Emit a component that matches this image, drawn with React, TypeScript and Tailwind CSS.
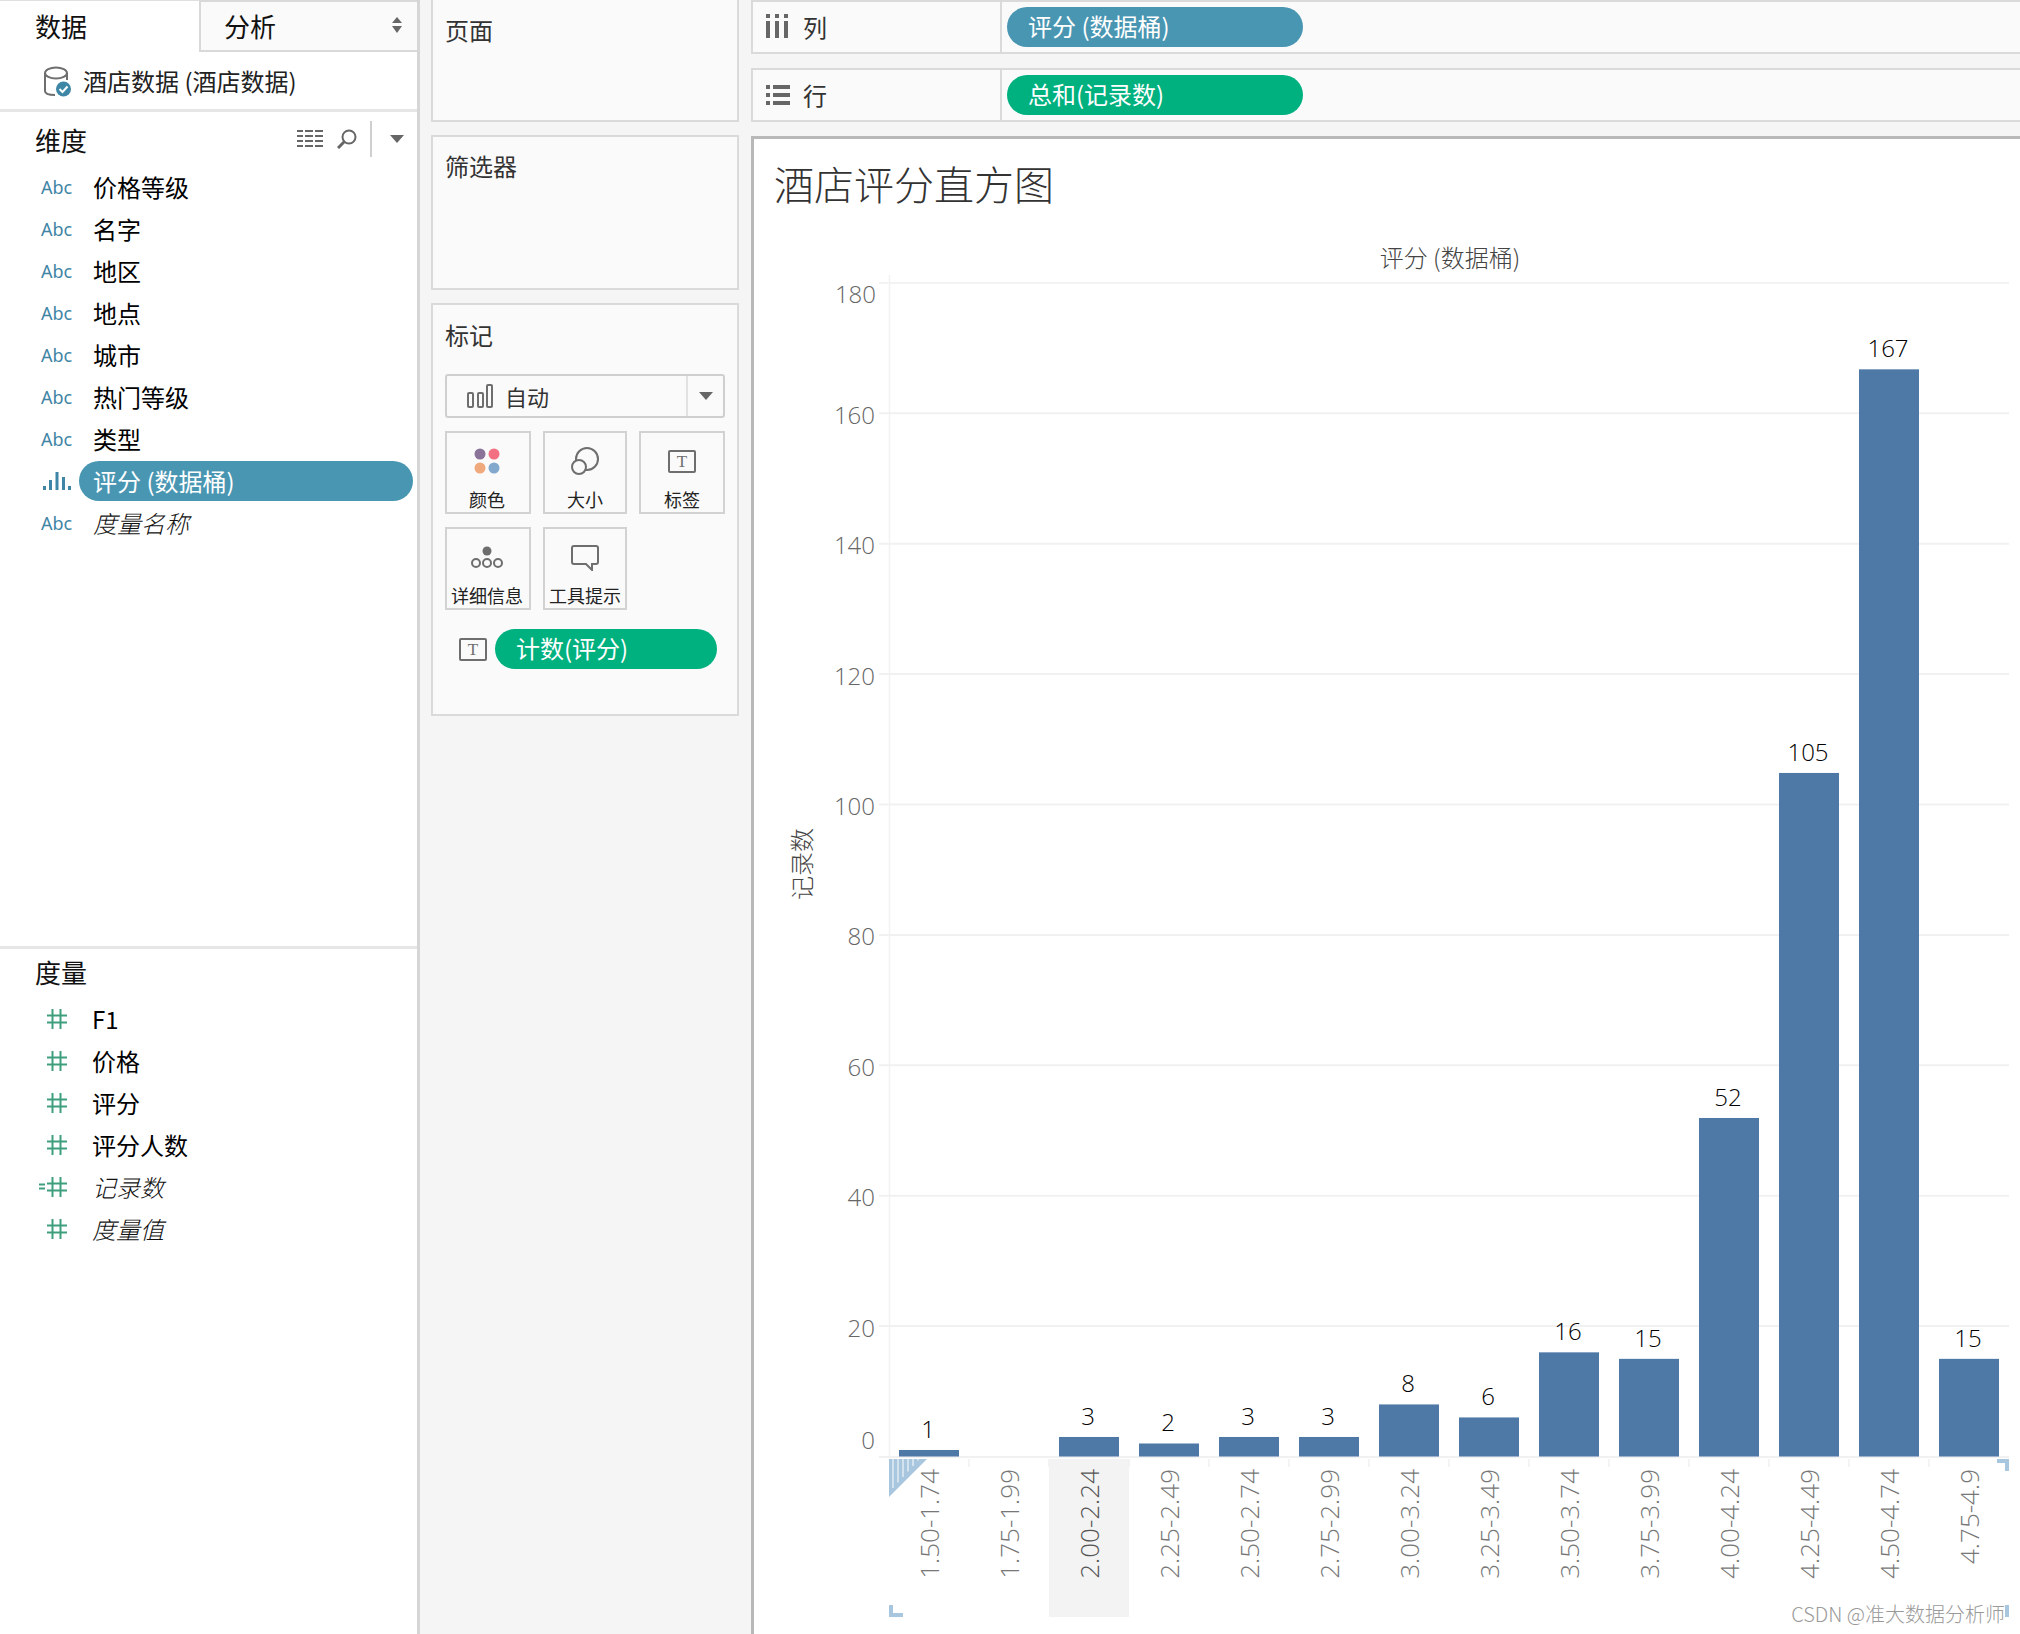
import React from "react";

const dims = ["价格等级", "名字", "地区", "地点", "城市", "热门等级", "类型"];
const ticks = [160, 140, 120, 100, 80, 60, 40, 20];
const num = "font-['Open_Sans',sans-serif] font-light";

function Abc() {
  return <span className="w-[36px] ml-[41px] text-[18px] leading-none not-italic text-[#3f85a5] font-['Noto_Sans',sans-serif] font-normal shrink-0">Abc</span>;
}

function Hash({ calc }: { calc?: boolean }) {
  return (
    <svg width="36" height="24" viewBox="0 0 36 24" className="ml-[37px] shrink-0 mr-[19px]" fill="none" stroke="#3f9f7c" strokeWidth="2">
      <path d="M15.5 2V22M23.5 2V22M10 8.5H30M10 15.5H30" />
      {calc && <path d="M2 9.5H8M2 13.5H8" />}
    </svg>
  );
}

function Row({ children, italic }: { children: React.ReactNode; italic?: boolean }) {
  return <div className={italic ? "h-[42px] flex items-center italic text-[24px] font-light text-[#111]" : "h-[42px] flex items-center text-[24px] text-black"}>{children}</div>;
}

function Card({ title, className, titleClass, children }: { title: string; className: string; titleClass: string; children?: React.ReactNode }) {
  return (
    <section className={"border-2 border-[#dadada] bg-[#fafafa] px-[12px] " + className}>
      <h2 className={"text-[24px] leading-[32px] text-[#333] font-normal " + titleClass}>{title}</h2>
      {children}
    </section>
  );
}

function MarkButton({ label, w, icon }: { label: string; w: string; icon: React.ReactNode }) {
  return (
    <div className={"h-[83px] border-2 border-[#d2d2d2] flex flex-col items-center " + w}>
      <div className="h-[42px] shrink-0 flex items-end justify-center">{icon}</div>
      <span className="text-[18px] leading-[26px] text-[#222] whitespace-nowrap mt-[11px]">{label}</span>
    </div>
  );
}

function TBox() {
  return (
    <svg width="28" height="23" viewBox="0 0 28 23" className="shrink-0">
      <rect x="1" y="1" width="26" height="21" rx="1" fill="none" stroke="#6e6e6e" strokeWidth="2" />
      <text x="14" y="17" textAnchor="middle" fontSize="17" fontFamily="'Liberation Serif',serif" fill="#6e6e6e">T</text>
    </svg>
  );
}

function Shelf({ icon, label, pill, color, className }: { icon: React.ReactNode; label: string; pill: string; color: string; className?: string }) {
  return (
    <div className={"h-[54px] border-2 border-r-0 border-[#dadada] bg-[#fafafa] flex items-stretch " + (className ?? "")}>
      <div className="w-[249px] border-r-2 border-[#dadada] flex items-center pl-[13px]">
        <div className="w-[36px] shrink-0 flex">{icon}</div>
        <span className="text-[24px] text-[#333] ml-[1px]">{label}</span>
      </div>
      <div className="flex items-center pl-[5px]">
        <div className={"w-[296px] h-[40px] rounded-full text-white text-[24px] leading-[38px] pl-[21px] " + color}>{pill}</div>
      </div>
    </div>
  );
}

const bars = [1, 0, 3, 2, 3, 3, 8, 6, 16, 15, 52, 105, 167, 15];
const cats = ["1.50-1.74", "1.75-1.99", "2.00-2.24", "2.25-2.49", "2.50-2.74", "2.75-2.99", "3.00-3.24", "3.25-3.49", "3.50-3.74", "3.75-3.99", "4.00-4.24", "4.25-4.49", "4.50-4.74", "4.75-4.9"];
const stripes = [0, 1, 2, 3, 4, 5];

function Chart() {
  const base = 1456.5;
  const k = 6.51;
  return (
    <svg width="1266" height="1398" viewBox="754 236 1266 1398" className="block shrink-0">
      <text x="1450" y="267" textAnchor="middle" className="fill-[#444] text-[24px] font-light">评分 (数据桶)</text>
      <rect x="1049" y="1459" width="80" height="158" fill="#f3f3f3" />
      <line x1="889.5" y1="275" x2="889.5" y2="1457" stroke="#f2f2f2" strokeWidth="1.5" />
      <line x1="879" y1="283" x2="2009" y2="283" stroke="#f3f3f3" strokeWidth="2" />
      {ticks.map((t) => (
        <line key={t} x1="879" y1={1456.5 - t * 6.52} x2="2009" y2={1456.5 - t * 6.52} stroke="#f1f1f1" strokeWidth="2" />
      ))}
      <line x1="879" y1="1457" x2="2009" y2="1457" stroke="#f1f1f1" strokeWidth="2" />
      {bars.slice(0, 13).map((_, i) => (
        <line key={i} x1={969 + 80 * i} y1="1459" x2={969 + 80 * i} y2="1467" stroke="#f0f0f0" strokeWidth="1.5" />
      ))}
      {[180, ...ticks].map((t) => {
        const yc = t === 180 ? 294.5 : 1456.5 - t * 6.52 + 2;
        return (
          <text key={t} x={t === 180 ? 876 : 875} y={yc + 8.5} textAnchor="end" className={"fill-[#666] text-[24px] " + num}>{t}</text>
        );
      })}
      <text x="875" y="1449" textAnchor="end" className={"fill-[#666] text-[24px] " + num}>0</text>
      <text transform="translate(811 864) rotate(-90)" textAnchor="middle" className="fill-[#444] text-[24px] font-light">记录数</text>
      {bars.map((b, i) => {
        const x = 899 + 80 * i;
        const top = base - b * k;
        return (
          <g key={i}>
            {b > 0 && <rect x={x} y={top} width="60" height={b * k} fill="#4e79a7" />}
            {b > 0 && <text x={x + 29} y={top - 12} textAnchor="middle" className={"fill-black text-[24px] " + num}>{b}</text>}
            <text transform={`translate(${x + 39.5} 1469) rotate(-90)`} textAnchor="end" className={(i === 2 ? "fill-[#555]" : "fill-[#777]") + " text-[26px] " + num}>{cats[i]}</text>
          </g>
        );
      })}
      <path d="M889 1459H927L889 1497Z" fill="#a9c6df" />
      {stripes.map((i) => (
        <line key={i} x1={893 + 5 * i} y1="1459" x2={893 + 5 * i} y2={1488 - 5.5 * i} stroke="#e0ebf4" strokeWidth="1.5" />
      ))}
      <path d="M889 1605H893V1613H903V1617H889Z" fill="#a9c6df" />
      <path d="M1997 1459H2009V1471H2005V1463H1997Z" fill="#a9c6df" />
      <path d="M2005 1605H2009V1617H2005Z" fill="#a9c6df" />
      <text x="2005" y="1622" textAnchor="end" className="fill-[#9a9a9a] text-[20px] font-light">CSDN @准大数据分析师</text>
    </svg>
  );
}

export default function App() {
  return (
    <div className="w-[2020px] h-[1634px] overflow-hidden flex bg-[#f5f5f5] font-['Noto_Sans_CJK_SC','Noto_Sans',sans-serif]">
      {/* Data pane */}
      <aside className="w-[420px] shrink-0 bg-white border-r-[3px] border-[#d6d6d6] flex flex-col">
        <div className="h-[52px] flex text-[26px] text-[#111]">
          <div className="w-[199px] border-t border-[#e0e0e0] pl-[35px] leading-[50px]">数据</div>
          <div className="flex-1 border-2 border-r-0 border-[#d9d9d9] bg-[#fafafa] pl-[23px] leading-[48px] flex justify-between">
            <span>分析</span>
            <svg width="12" height="16" viewBox="0 0 12 16" className="mt-[15px] mr-[14px]" fill="#666"><path d="M6 0L11 6H1ZM6 16L1 9H11Z" /></svg>
          </div>
        </div>
        <div className="h-[60px] border-b-[3px] border-[#e6e6e6] flex items-center pl-[43px] text-[24px] text-[#222]">
          <svg width="30" height="32" viewBox="0 0 30 32" className="shrink-0 mr-[10px] mt-[2px]" fill="none">
            <path d="M2 7V25C2 28 5 29 12 29M24 7V14" stroke="#6e6e6e" strokeWidth="2" />
            <ellipse cx="13" cy="7" rx="11" ry="5.5" stroke="#6e6e6e" strokeWidth="2" />
            <circle cx="20.5" cy="23" r="7.5" fill="#3e86a5" />
            <path d="M16.5 23L19.5 26L24.5 20.5" stroke="#fff" strokeWidth="2" />
          </svg>
          <span>酒店数据 (酒店数据)</span>
        </div>
        <div className="h-[54px] flex items-center pl-[35px] text-[26px] text-[#111]">
          <span className="flex-1">维度</span>
          <svg width="26" height="18" viewBox="0 0 26 18" className="mr-[14px]" fill="#666">
            <path d="M0 0h6v2H0zM8 0h8v2H8zM18 0h8v2h-8zM0 5h6v2H0zM8 5h8v2H8zM18 5h8v2h-8zM0 10h6v2H0zM8 10h8v2H8zM18 10h8v2h-8zM0 15h6v2H0zM8 15h8v2H8zM18 15h8v2h-8z" />
          </svg>
          <svg width="20" height="20" viewBox="0 0 20 20" className="mr-[13px]" fill="none" stroke="#666" strokeWidth="2">
            <circle cx="12" cy="8" r="6.5" />
            <path d="M7.5 12.5L1 19" strokeWidth="3" />
          </svg>
          <div className="w-[2px] h-[36px] bg-[#cfcfcf] mr-[18px]" />
          <svg width="14" height="8" viewBox="0 0 14 8" className="mr-[13px]" fill="#666"><path d="M0 0H14L7 8Z" /></svg>
        </div>
        {dims.map((d) => (
          <Row key={d}><Abc /><span className="ml-[16px]">{d}</span></Row>
        ))}
        <div className="h-[42px] flex items-center">
          <svg width="28" height="18" viewBox="0 0 28 18" className="ml-[43px] shrink-0" fill="#3f85a5">
            <rect x="0" y="14" width="3" height="4" />
            <rect x="6" y="8" width="3" height="10" />
            <rect x="12.5" y="0" width="3" height="18" />
            <rect x="19" y="5" width="3" height="13" />
            <rect x="25" y="14" width="3" height="4" />
          </svg>
          <div className="ml-[8px] w-[334px] h-[40px] rounded-full bg-[#4996b2] text-white text-[24px] leading-[40px] pl-[14px]">评分 (数据桶)</div>
        </div>
        <Row italic><Abc /><span className="ml-[16px]">度量名称</span></Row>
        <div className="h-[402px] shrink-0" />
        <div className="h-[3px] bg-[#e6e6e6] shrink-0" />
        <div className="h-[49px] flex items-center pl-[35px] pb-[5px] text-[26px] text-[#111]">度量</div>
        <Row><Hash /><span>F1</span></Row>
        <Row><Hash /><span>价格</span></Row>
        <Row><Hash /><span>评分</span></Row>
        <Row><Hash /><span>评分人数</span></Row>
        <Row italic><Hash calc /><span>记录数</span></Row>
        <Row italic><Hash /><span>度量值</span></Row>
      </aside>

      {/* Cards column */}
      <div className="w-[308px] ml-[11px] shrink-0 flex flex-col">
        <Card title="页面" titleClass="pt-[14px]" className="h-[122px] border-t-0" />
        <Card title="筛选器" titleClass="pt-[13px]" className="h-[155px] mt-[13px]" />
        <Card title="标记" titleClass="pt-[14px]" className="h-[413px] mt-[13px]">
          <div className="mt-[23px] h-[44px] w-[280px] border-2 border-[#cfcfcf] rounded-[3px] flex items-stretch">
            <div className="flex-1 flex items-center pl-[20px]">
              <svg width="26" height="24" viewBox="0 0 26 24" fill="none" stroke="#6e6e6e" strokeWidth="2" className="mr-[12px]">
                <rect x="1" y="9" width="5" height="14" rx="1" />
                <rect x="11" y="9" width="5" height="14" rx="1" />
                <rect x="20" y="1" width="5" height="22" rx="1" />
              </svg>
              <span className="text-[22px] text-[#333]">自动</span>
            </div>
            <div className="w-[37px] border-l-2 border-[#e2e2e2] flex items-center justify-center">
              <svg width="14" height="8" viewBox="0 0 14 8" fill="#666"><path d="M0 0H14L7 8Z" /></svg>
            </div>
          </div>
          <div className="mt-[13px] flex gap-[12px]">
            <MarkButton label="颜色" w="w-[86px] pr-[2px]" icon={
              <svg width="26" height="26" viewBox="0 0 26 26" className="mb-[1px]">
                <circle cx="6" cy="6" r="5.5" fill="#8a7399" />
                <circle cx="20" cy="6" r="5.5" fill="#f36f82" />
                <circle cx="6" cy="20" r="5.5" fill="#f0a97c" />
                <circle cx="20" cy="20" r="5.5" fill="#82a8ce" />
              </svg>} />
            <MarkButton label="大小" w="w-[84px]" icon={
              <svg width="30" height="28" viewBox="0 0 30 28" fill="#fafafa" stroke="#6e6e6e" strokeWidth="2">
                <circle cx="17" cy="12" r="11" />
                <circle cx="9" cy="20" r="7" />
              </svg>} />
            <MarkButton label="标签" w="w-[86px]" icon={<div className="mb-[2px]"><TBox /></div>} />
          </div>
          <div className="mt-[13px] flex gap-[12px]">
            <MarkButton label="详细信息" w="w-[86px] pr-[2px]" icon={
              <svg width="34" height="22" viewBox="0 0 34 22" fill="none" stroke="#6e6e6e" strokeWidth="2" className="mb-[3px]">
                <circle cx="17" cy="5" r="4.5" fill="#6e6e6e" stroke="none" />
                <circle cx="6" cy="17" r="4" />
                <circle cx="17" cy="17" r="4" />
                <circle cx="28" cy="17" r="4" />
              </svg>} />
            <MarkButton label="工具提示" w="w-[84px]" icon={
              <svg width="28" height="26" viewBox="0 0 28 26" fill="none" stroke="#6e6e6e" strokeWidth="2">
                <path d="M3 1H25Q27 1 27 3V17Q27 19 25 19H21V25L15 19H3Q1 19 1 17V3Q1 1 3 1Z" />
              </svg>} />
          </div>
          <div className="mt-[19px] flex items-center pl-[14px]">
            <TBox />
            <div className="ml-[8px] w-[222px] h-[40px] rounded-full bg-[#00b180] text-white text-[24px] leading-[38px] pl-[21px]">计数(评分)</div>
          </div>
        </Card>
      </div>

      {/* Right column */}
      <div className="flex-1 ml-[12px] min-w-0 flex flex-col">
        <Shelf
          label="列"
          pill="评分 (数据桶)"
          color="bg-[#4996b2]"
          className="border-t-2"
          icon={
            <svg width="24" height="24" viewBox="0 0 24 24" fill="#666" className="mb-[2px]">
              <path d="M0 0h4v4H0zM9 0h4v4H9zM18 0h4v4h-4zM0 7h4v17H0zM9 7h4v17H9zM18 7h4v17h-4z" />
            </svg>
          }
        />
        <Shelf
          label="行"
          pill="总和(记录数)"
          color="bg-[#00b180]"
          className="mt-[14px]"
          icon={
            <svg width="24" height="20" viewBox="0 0 24 20" fill="#666">
              <path d="M0 0h4v4H0zM7 0h17v4H7zM0 8h4v4H0zM7 8h17v4H7zM0 16h4v4H0zM7 16h17v4H7z" />
            </svg>
          }
        />
        <div className="mt-[14px] flex-1 min-h-0 bg-white border-l-[3px] border-t-[3px] border-[#b8b8b8] flex flex-col">
          <h1 className="h-[97px] pl-[20px] pt-[19px] text-[40px] leading-[50px] font-light text-[#333]">酒店评分直方图</h1>
          <Chart />
        </div>
      </div>
    </div>
  );
}
